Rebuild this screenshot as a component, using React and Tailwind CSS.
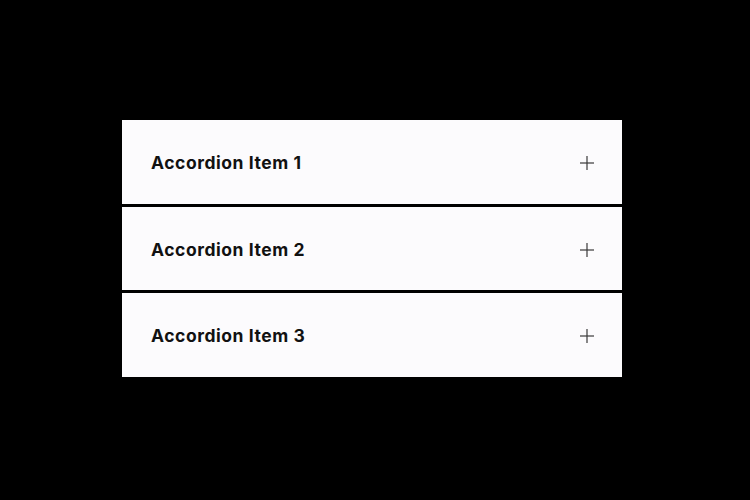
import React, { useState } from "react";

const items = [
  { id: 1, title: "Accordion Item 1", body: "Content for the first item." },
  { id: 2, title: "Accordion Item 2", body: "Content for the second item." },
  { id: 3, title: "Accordion Item 3", body: "Content for the third item." },
];

const PlusIcon = () => (
  <svg width="16" height="16" viewBox="0 0 16 16" className="text-[#3a3a3a]">
    <line x1="8" y1="1" x2="8" y2="15" stroke="currentColor" strokeWidth="1.2" />
    <line x1="1" y1="8" x2="15" y2="8" stroke="currentColor" strokeWidth="1.2" />
  </svg>
);

export default function App() {
  const [open, setOpen] = useState(null);

  return (
    <div className="min-h-screen h-[500px] bg-black flex justify-center pt-[120px] pr-[6px]">
      <div className="w-[500px] flex flex-col gap-[3px]">
        {items.map((item) => (
          <div key={item.id} className="bg-[#fcfbfd]">
            <button
              onClick={() => setOpen(open === item.id ? null : item.id)}
              className="w-full h-[83.5px] flex items-center justify-between pl-[29px] pr-[27px] pt-[3px] text-left"
            >
              <span className="font-['Inter',sans-serif] font-bold text-[17.5px] tracking-[0.55px] text-[#111]">
                {item.title}
              </span>
              <PlusIcon />
            </button>
            {open === item.id && (
              <div className="px-[29px] pb-5 text-sm text-gray-600">{item.body}</div>
            )}
          </div>
        ))}
      </div>
    </div>
  );
}
